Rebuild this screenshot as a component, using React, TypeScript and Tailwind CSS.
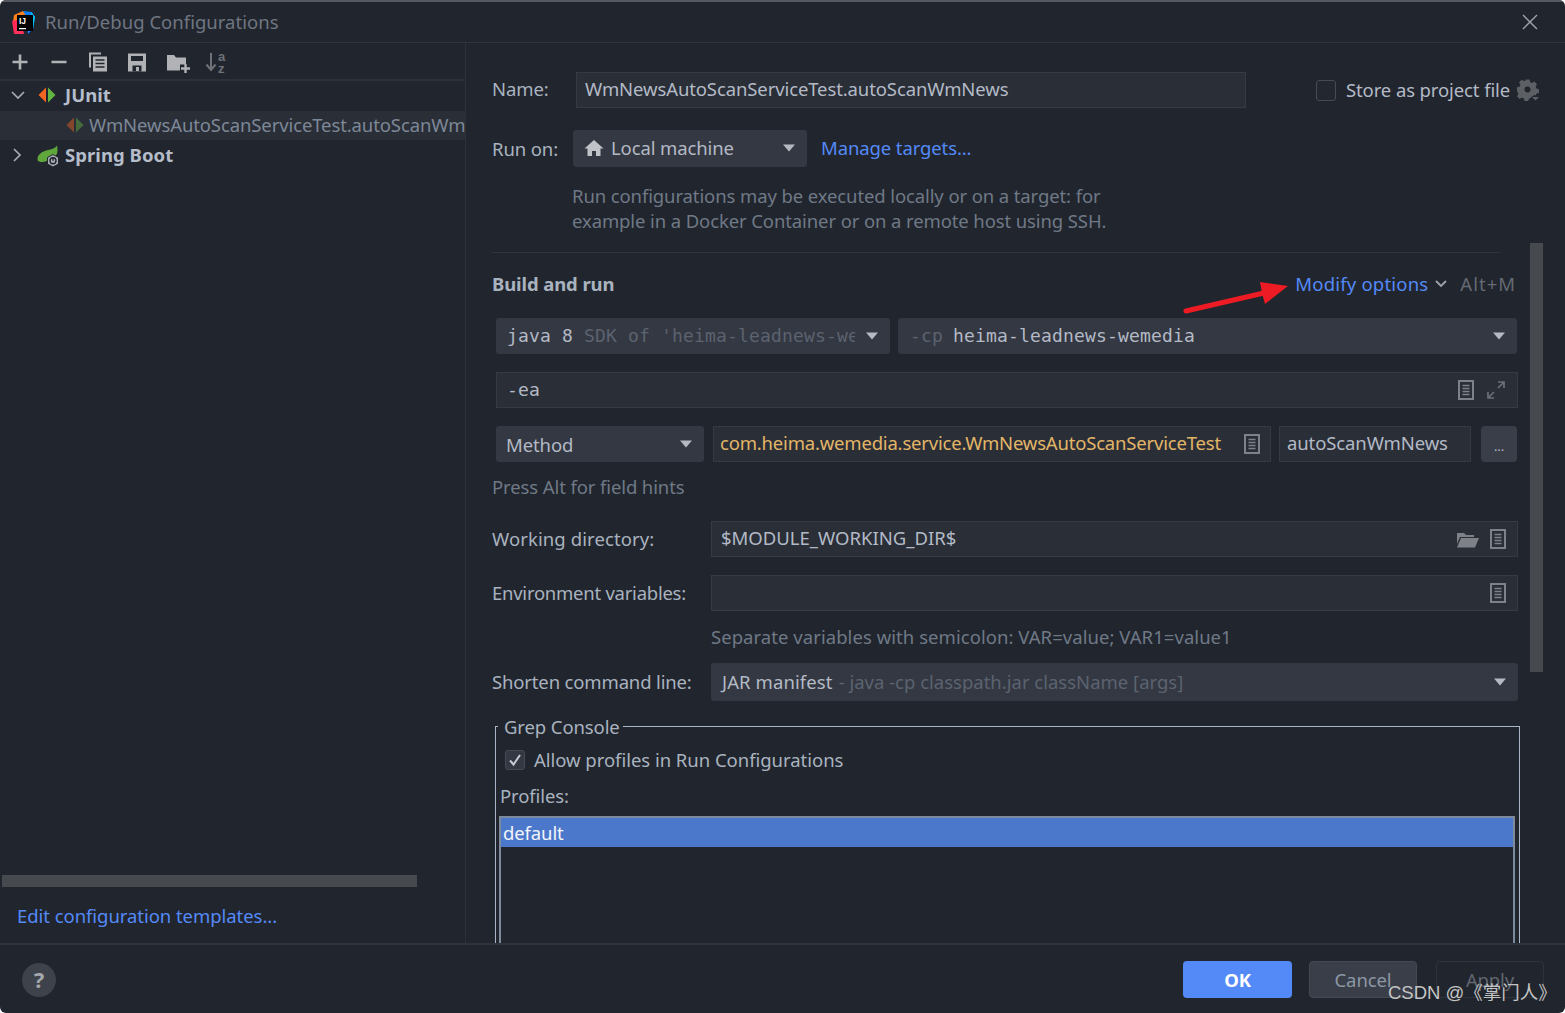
import React from 'react';

const UI = "font-['Noto_Sans','Open_Sans',sans-serif]";
const MONO = "font-['DejaVu_Sans_Mono','Liberation_Mono',monospace]";

const Caret = () => (
  <svg width="14" height="8" viewBox="0 0 14 8" className="shrink-0"><path d="M1 0.5h12L7 7.5z" fill="#b4b9c2" /></svg>
);

const DocIcon = () => (
  <svg width="16" height="20" viewBox="0 0 16 20" className="shrink-0">
    <rect x="1" y="1" width="14" height="18" fill="none" stroke="#7e8288" strokeWidth="2" />
    <path d="M4.5 5.5h7M4.5 8.5h7M4.5 11.500h7M4.500 14.500h7" stroke="#7e8288" strokeWidth="1.300" />
  </svg>
);

const JUnitIcon = ({ dim }: { dim?: boolean }) => (
  <svg width="18" height="16" viewBox="0 0 18 16" className="shrink-0" opacity={dim ? 0.45 : 1}>
    <path d="M8 0.500v15L0.500 8z" fill="#f26522" />
    <path d="M10 0.500v15L17.500 8z" fill="#62b543" />
  </svg>
);

const SpringIcon = () => (
  <svg width="24" height="23" viewBox="0 0 24 23" className="shrink-0">
    <path d="M0.500 15C0 9 6 6 11 5c3-.500 7-1.500 9-4.500 1 5 .500 9-2 11-3 3-7 4-10 5-3 .800-6 1-7.500-1.500z" fill="#5fa63b" />
    <path d="M16 9.500l5.500 3v6.500l-5.500 3-5.500-3v-6.500z" fill="#a9aeb6" stroke="#21252e" strokeWidth="1" />
    <circle cx="16" cy="15.800" r="3" fill="none" stroke="#21252e" strokeWidth="1.400" />
    <path d="M16 12v3.800" stroke="#21252e" strokeWidth="1.400" />
  </svg>
);

const IdeaLogo = () => (
  <svg width="25" height="25" viewBox="0 0 25 25">
    <path d="M3 5l9-4 3 4-9 9-4-2z" fill="#fc801d" />
    <path d="M12 1l9 1 3 5-2 12-5 5-2-18z" fill="#087cfa" />
    <path d="M20 2l4 5-2 12-3-8z" fill="#07c3f2" />
    <path d="M1 11l5-1 2 13-5 1z" fill="#fe2857" />
    <path d="M3 18l9 1 1 5-9 0z" fill="#fe315d" />
    <path d="M6 5h16v16H6z" fill="#000" />
    <path d="M8 18h7v1.300H8z" fill="#fff" />
    <text x="8" y="14" fontSize="8.500" fontWeight="700" fill="#fff" fontFamily="Liberation Sans, sans-serif">IJ</text>
  </svg>
);

const Toolbar = () => (
  <div className="h-[38px] flex items-center border-b-2 border-[#2c3038]">
    <svg width="230" height="24" viewBox="0 0 230 24" className="ml-[10px] mt-[1px]">
      <path d="M10 4.500v15M2.500 12h15" stroke="#b0b2b5" strokeWidth="2.600" />
      <path d="M41.500 12h15" stroke="#b0b2b5" strokeWidth="2.600" />
      <path d="M79 2.500h12v2H81v13h-2z" fill="#b0b2b5" />
      <path d="M83 6.500h14v15H83z" fill="#b0b2b5" />
      <path d="M85.500 10h9M85.500 13.500h9M85.500 17h9" stroke="#21252e" strokeWidth="1.300" />
      <path d="M118 3.500h18v18h-18z" fill="#b0b2b5" />
      <path d="M121 6h12v5h-12zM122.500 15.500h9v6h-9z" fill="#21252e" />
      <path d="M126 17h3v4h-3z" fill="#b0b2b5" />
      <path d="M157 5h7l2 2.500h10v7h-6v6h-13z" fill="#b0b2b5" />
      <path d="M175.500 14v9M171 18.500h9" stroke="#b0b2b5" strokeWidth="2.400" />
      <path d="M201 3v16M196.500 14.500l4.500 5.500 4.500-5.500" fill="none" stroke="#6f7277" strokeWidth="2" />
      <text x="208" y="11" fontSize="13" fontWeight="700" fill="#6f7277" fontFamily="Liberation Sans, sans-serif">a</text>
      <text x="208" y="22.500" fontSize="13" fontWeight="700" fill="#6f7277" fontFamily="Liberation Sans, sans-serif">z</text>
    </svg>
  </div>
);

const Sidebar = () => (
  <div className="w-[466px] shrink-0 border-r border-[#2c3038] flex flex-col overflow-hidden">
    <Toolbar />
    <div className="h-[30px] pb-[2px] flex items-center font-bold text-[#b5bdca] tracking-[0.05px]">
      <svg width="14" height="9" viewBox="0 0 14 9" className="ml-[11px]"><path d="M1 1l6 6 6-6" fill="none" stroke="#a8abb0" strokeWidth="1.700" /></svg>
      <span className="ml-[13px]"><JUnitIcon /></span>
      <span className="ml-[9px]">JUnit</span>
    </div>
    <div className="h-[29px] pb-[2px] flex items-center bg-[#2a2e37] text-[#7d8897] whitespace-nowrap overflow-hidden">
      <span className="ml-[66px]"><JUnitIcon dim /></span>
      <span className="ml-[5px]">WmNewsAutoScanServiceTest.autoScanWmNews</span>
    </div>
    <div className="h-[30px] flex items-center font-bold text-[#b5bdca] tracking-[0.05px]">
      <svg width="9" height="14" viewBox="0 0 9 14" className="ml-[13px]"><path d="M1 1l6 6-6 6" fill="none" stroke="#a8abb0" strokeWidth="1.700" /></svg>
      <span className="ml-[15px] pt-[2px]"><SpringIcon /></span>
      <span className="ml-[4px]">Spring Boot</span>
    </div>
    <div className="flex-1" />
    <div className="h-[12px] w-[415px] ml-[2px] bg-[#46494e]" />
    <div className="h-[56px] flex items-center pl-[17px] pt-[2px] text-[#548af7] tracking-[-0.05px]">Edit configuration templates...</div>
  </div>
);

const Field = ({ className, children }: { className?: string; children?: React.ReactNode }) => (
  <div className={`h-[36px] flex items-center bg-[#2a2e37] border border-[#363a43] text-[#b3bac6] ${className ?? ''}`}>{children}</div>
);

const Select = ({ className, children }: { className?: string; children?: React.ReactNode }) => (
  <div className={`flex items-center bg-[#343842] rounded-[3px] text-[#b3bac6] ${className ?? ''}`}>{children}</div>
);

const ConfigForm = () => (
  <div className="flex-1 min-w-0 relative pl-[26px] overflow-hidden">
    <div className="h-[29px]" />
    <div className="flex items-center h-[36px]">
      <span className="w-[84px] text-[#a9b3bf] pb-[2px]">Name:</span>
      <Field className="w-[670px] pl-[8px] pb-[2px]">WmNewsAutoScanServiceTest.autoScanWmNews</Field>
      <div className="w-[20px] h-[21px] ml-[70px] rounded-[3px] border border-[#454a53] bg-[#23272f]" />
      <span className="ml-[10px] w-[172px] whitespace-nowrap text-[#b3bac6]">Store as project file</span>
      <svg width="22" height="22" viewBox="0 0 22 22" className="-ml-[1px]">
        <path d="M8.500 1h4l.600 2.600 2 .900 2.300-1.400 2.600 2.700-1.400 2.200.900 2.100 2.500.600v3.700l-2.500.600-.900 2-1.600-.500-5 4-1 2h-3.500l-.600-2.500-2-.900-2.300 1.400-2.600-2.700 1.400-2.200-.900-2.100L0 12.500V8.800l2.500-.600.900-2.100-1.400-2.200 2.600-2.700 2.300 1.400 2-.900z" fill="#5c5f64" transform="translate(0 -.500)" />
        <circle cx="10.500" cy="10.500" r="3" fill="#21252e" />
        <path d="M15 18h7l-3.500 3.500z" fill="#5c5f64" />
      </svg>
    </div>
    <div className="flex items-center h-[37px] mt-[22px]">
      <span className="w-[81px] text-[#a9b3bf]">Run on:</span>
      <Select className="w-[234px] h-[37px] pl-[11px] pr-[11px] pb-[1px]">
        <svg width="20" height="18" viewBox="0 0 20 18"><path d="M10 1L0.500 9.500H3.500V17h4.500v-5h4v5h4.500V9.500h3z" fill="#c0c3c8" /></svg>
        <span className="ml-[7px] flex-1">Local machine</span>
        <Caret />
      </Select>
      <span className="ml-[14px] pb-[1px] text-[#548af7]">Manage targets...</span>
    </div>
    <div className="ml-[80px] mt-[16px] leading-[25px] text-[#6f7986]">
      <div>Run configurations may be executed locally or on a target: for</div>
      <div>example in a Docker Container or on a remote host using SSH.</div>
    </div>
    <div className="w-[1009px] h-px bg-[#30343c] mt-[19px]" />
    <div className="flex items-center h-[26px] mt-[18px] w-[1024px]">
      <span className="font-bold text-[#a9b3bf] flex-1">Build and run</span>
      <span className="text-[#548af7] tracking-[0.2px]">Modify options</span>
      <svg width="12" height="8" viewBox="0 0 12 8" className="ml-[7px]"><path d="M1 1l5 5 5-5" fill="none" stroke="#a0a4aa" strokeWidth="1.800" /></svg>
      <span className="ml-[13px] text-[#656a72] tracking-[1px]">Alt+M</span>
    </div>
    <div className={`flex mt-[21px] ml-[4px] gap-[8px] ${MONO} text-[18px] tracking-[0.16px]`}>
      <Select className="w-[394px] h-[36px] pl-[11px] pr-[11px] pb-[1px]">
        <span className="w-[349px] overflow-hidden whitespace-nowrap text-[#b3bac6]">java 8 <span className="text-[#5b6370]">SDK of 'heima-leadnews-wemedia'</span></span>
        <span className="ml-[10px]"><Caret /></span>
      </Select>
      <Select className="w-[619px] h-[36px] pl-[12px] pr-[11px] pb-[1px]">
        <span className="text-[#5b6370]">-cp</span>
        <span className="ml-[10px] flex-1 text-[#b3bac6]">heima-leadnews-wemedia</span>
        <Caret />
      </Select>
    </div>
    <Field className={`w-[1022px] ml-[4px] mt-[18px] pl-[10px] pr-[11px] pb-[1px] ${MONO} text-[18px] tracking-[0.16px]`}>
      <span className="flex-1">-ea</span>
      <DocIcon />
      <svg width="20" height="20" viewBox="0 0 20 20" className="ml-[12px]"><path d="M12 2h6v6M18 2l-6 6M8 18H2v-6M2 18l6-6" fill="none" stroke="#6c7076" strokeWidth="1.700" /></svg>
    </Field>
    <div className="flex mt-[18px] ml-[4px]">
      <Select className="w-[208px] h-[36px] pl-[10px] pr-[11px]">
        <span className="flex-1 pt-[2px]">Method</span>
        <Caret />
      </Select>
      <Field className="w-[558px] ml-[9px] pl-[6px] pr-[10px] !text-[#e3b667]">
        <span className="flex-1 whitespace-nowrap pb-[2px] tracking-[-0.19px]">com.heima.wemedia.service.WmNewsAutoScanServiceTest</span>
        <DocIcon />
      </Field>
      <Field className="w-[192px] ml-[8px] pl-[7px] pb-[2px]">autoScanWmNews</Field>
      <div className="w-[36px] h-[36px] ml-[10px] rounded-[4px] bg-[#3a3e48] text-[#b3bac6] flex items-center justify-center text-[13px] pt-[6px]">...</div>
    </div>
    <div className="h-[26px] mt-[12px] flex items-center text-[#6f7986]">Press Alt for field hints</div>
    <div className="flex items-center mt-[21px]">
      <span className="w-[219px] text-[#a9b3bf] tracking-[0.1px]">Working directory:</span>
      <Field className="w-[807px] pl-[9px] pr-[11px]">
        <span className="flex-1 pb-[2px] tracking-[0px]">$MODULE_WORKING_DIR$</span>
        <svg width="23" height="17" viewBox="0 0 23 17" className="mr-[11px]">
          <path d="M1 2h7l2 2h8v2H4L1 13z" fill="#7e8288" />
          <path d="M5 7h18l-4 9.500H1z" fill="#7e8288" />
        </svg>
        <DocIcon />
      </Field>
    </div>
    <div className="flex items-center mt-[18px]">
      <span className="w-[219px] text-[#a9b3bf] tracking-[-0.25px]">Environment variables:</span>
      <Field className="w-[807px] pr-[11px] justify-end"><DocIcon /></Field>
    </div>
    <div className="ml-[219px] h-[26px] mt-[13px] flex items-center text-[#6f7986] tracking-[0.05px]">Separate variables with semicolon: VAR=value; VAR1=value1</div>
    <div className="flex items-center mt-[13px]">
      <span className="w-[219px] text-[#a9b3bf] tracking-[-0.15px]">Shorten command line:</span>
      <Select className="w-[807px] h-[38px] pl-[11px] pr-[11px]">
        <span className="tracking-[0.1px]">JAR manifest</span>
        <span className="ml-[6px] flex-1 text-[#5b6370] tracking-[0px]">- java -cp classpath.jar className [args]</span>
        <Caret />
      </Select>
    </div>
    <div className="relative w-[1025px] ml-[3px] mt-[25px] h-[300px] border border-[#aab6c6] pl-[4px]">
      <span className="absolute left-[2px] -top-[13px] h-[26px] pl-[6px] pr-[3px] bg-[#21252e] flex items-center text-[#a9b3bf]">Grep Console</span>
      <div className="flex items-center h-[26px] mt-[20px] ml-[5px]">
        <div className="w-[20px] h-[20px] rounded-[3px] bg-[#343842] border border-[#454a53] flex items-center justify-center">
          <svg width="14" height="14" viewBox="0 0 14 14"><path d="M2 7.500l3.500 4L12 2" fill="none" stroke="#c8ccd2" strokeWidth="2" /></svg>
        </div>
        <span className="ml-[9px] text-[#a9b3bf] tracking-[-0.03px]">Allow profiles in Run Configurations</span>
      </div>
      <div className="h-[26px] flex items-center mt-[10px] text-[#a9b3bf]">Profiles:</div>
      <div className="mt-[7px] w-[1016px] h-[300px] border-l-2 border-r-2 border-t-2 border-[#7c8a9c] -ml-px">
        <div className="h-[29px] flex items-center pl-[2px] bg-[#4c78cc] text-[#f2f5fa]">default</div>
      </div>
    </div>
    {/* panel scrollbar */}
    <div className="absolute left-[1064px] top-[200px] w-[13px] h-[429px] bg-[#46494e]" />
    {/* annotation arrow */}
    <svg width="110" height="36" viewBox="0 0 110 36" className="absolute left-[716px] top-[236px]">
      <path d="M4 32L84 13.500" stroke="#ed1c24" strokeWidth="5" strokeLinecap="round" fill="none" />
      <path d="M106 7L78 3 80 14 83 25z" fill="#ed1c24" />
    </svg>
  </div>
);

const Footer = () => (
  <div className="h-[70px] border-t-2 border-[#2e323a] flex items-center pl-[22px] pr-[21px] pt-[1px]">
    <div className="w-[34px] h-[34px] rounded-full bg-[#3e424a] flex items-center justify-center font-bold text-[22px] text-[#a5a8ad]">?</div>
    <div className="flex-1" />
    <div className="w-[109px] h-[37px] rounded-[4px] bg-[#548af7] flex items-center justify-center font-bold text-white">OK</div>
    <div className="w-[108px] h-[37px] ml-[17px] rounded-[4px] bg-[#3a3e48] border border-[#454952] flex items-center justify-center text-[#8c97a5]">Cancel</div>
    <div className="w-[108px] h-[37px] ml-[19px] rounded-[4px] border border-[#2e323a] flex items-center justify-center text-[#616770]">Apply</div>
  </div>
);

export default function App() {
  return (
    <div className={`relative w-[1565px] h-[1013px] overflow-hidden rounded-[6px] bg-[#21252e] text-[18.5px] tracking-[-0.11px] ${UI}`}>
      <div className="h-[2px] bg-[#55585e]" />
      <div className="h-[41px] flex items-center border-b border-[#30343c]">
        <span className="ml-[11px]"><IdeaLogo /></span>
        <span className="ml-[9px] flex-1 text-[#6f7681] tracking-[0.02px]">Run/Debug Configurations</span>
        <svg width="16" height="16" viewBox="0 0 16 16" className="mr-[27px]"><path d="M1 1l14 14M15 1L1 15" stroke="#a0a4aa" strokeWidth="1.400" /></svg>
      </div>
      <div className="flex h-[900px]">
        <Sidebar />
        <ConfigForm />
      </div>
      <Footer />
      <div className="absolute left-[1388px] top-[981px] text-[#c4c4c4] text-[18.5px] leading-[24px] tracking-normal font-['Liberation_Sans','Noto_Sans_CJK_SC',sans-serif] whitespace-nowrap">CSDN @《掌门人》</div>
    </div>
  );
}
